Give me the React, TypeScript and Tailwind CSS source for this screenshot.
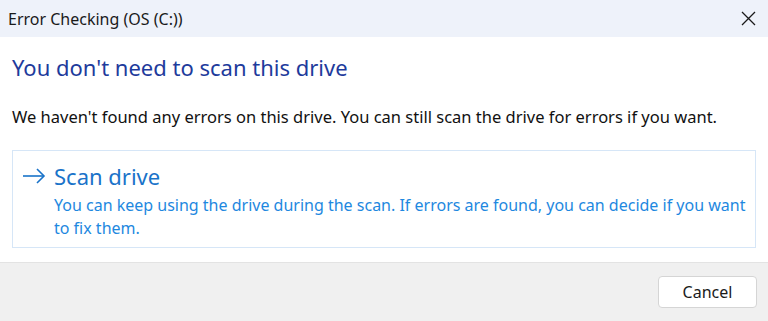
import React from 'react';

const font = { fontFamily: '"Noto Sans", "Open Sans", sans-serif' };

const ArrowRight: React.FC = () => (
  <svg width="24" height="16" viewBox="0 0 24 16" fill="none" stroke="currentColor" strokeWidth="1.6">
    <path d="M1 8h21" />
    <path d="M15 1l7 7-7 7" />
  </svg>
);

const App: React.FC = () => {
  return (
    <div className="w-[768px] h-[321px] bg-white flex flex-col overflow-hidden" style={font}>
      {/* title bar */}
      <div className="h-[37px] shrink-0 bg-[#eef2fa] flex items-center justify-between pl-[8px] pr-[12px]">
        <span className="text-[16px] text-[#1a1a1a]">Error Checking (OS (C:))</span>
        <svg width="15" height="15" viewBox="0 0 15 15" stroke="#1a1a1a" strokeWidth="1.3">
          <path d="M1 1l13 13M14 1L1 14" />
        </svg>
      </div>

      <div className="flex-1 px-[12px]">
        <h1 className="mt-[15px] text-[22px] leading-[30px] text-[#1e3b9c]">You don't need to scan this drive</h1>
        <p className="mt-[24px] text-[16.5px] leading-[22px] text-[#111]">
          We haven't found any errors on this drive. You can still scan the drive for errors if you want.
        </p>

        <div className="mt-[22px] border border-[#d6e6f7] pl-[9px] pr-[2px] pt-[10px] pb-[7px] flex gap-[8px]">
          <div className="text-[#1a73c9] pt-[7px] shrink-0">
            <ArrowRight />
          </div>
          <div className="flex flex-col">
            <span className="text-[22px] leading-[30px] text-[#1a73c9]">Scan drive</span>
            <span className="mt-[3px] text-[16px] leading-[23px] text-[#1e88e0]">
              You can keep using the drive during the scan. If errors are found, you can decide if you want to fix them.
            </span>
          </div>
        </div>
      </div>

      <div className="h-[59px] shrink-0 bg-[#f0f0f0] border-t border-[#e3e3e3] flex items-center justify-end pr-[11px]">
        <button className="w-[99px] h-[32px] bg-white border border-[#d5d5d5] rounded-[4px] text-[16px] text-[#1a1a1a]">
          Cancel
        </button>
      </div>
    </div>
  );
};

export default App;
